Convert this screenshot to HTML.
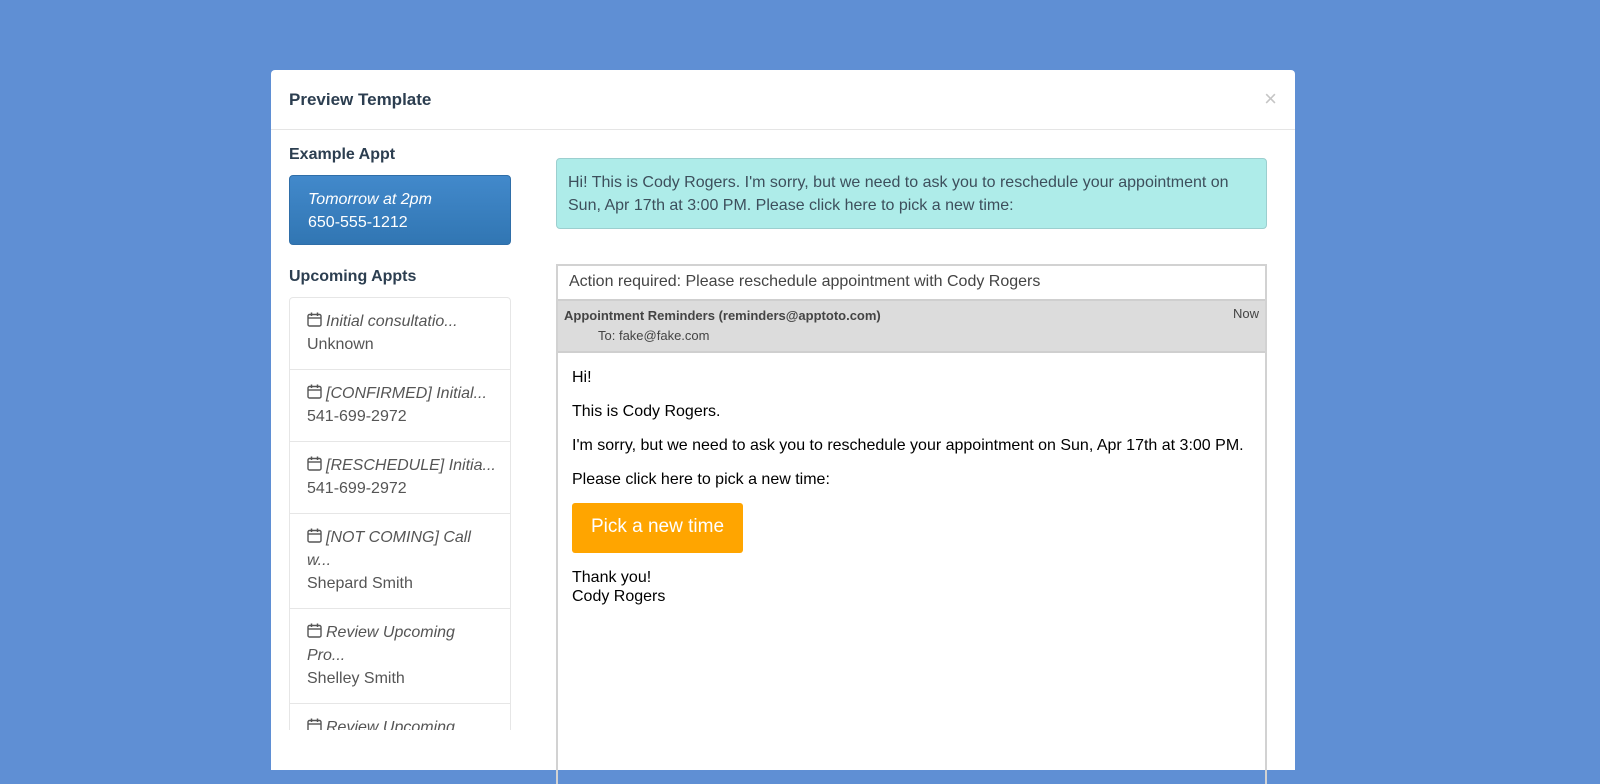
<!DOCTYPE html>
<html><head><style>
*{margin:0;padding:0;box-sizing:border-box}
body{width:1600px;height:751px;background:#5f8fd4;font-family:"Liberation Sans",sans-serif;position:relative;overflow:hidden;color:#444}
.modal{position:absolute;left:271px;top:70px;width:1024px;height:700px;background:#fff;border-radius:4px 4px 0 0}
.hdr{position:absolute;left:0;top:0;width:100%;height:60px;border-bottom:1px solid #e5e5e5}
.hdr h4{position:absolute;left:18px;top:20px;font-size:17px;font-weight:bold;color:#2c3e50}
.close{position:absolute;right:18px;top:16px;font-size:22px;color:#c5c5c5}
.lbl{position:absolute;left:18px;font-size:16px;font-weight:bold;color:#2c3e50}
.ex{position:absolute;left:18px;top:105px;width:222px;height:70px;border-radius:4px;background:linear-gradient(#4289cb,#3176b3);border:1px solid #2f6ea8;color:#fff;padding:12px 18px;font-size:16px;line-height:23px}
.list{position:absolute;left:18px;top:227px;width:222px;height:433px;overflow:hidden}
.it{border:1px solid #e6e6e6;border-top:none;padding:12px 17px 13px;font-size:16px;line-height:23px;color:#555}
.it:first-child{border-top:1px solid #e6e6e6;border-radius:4px 4px 0 0}
.it i{color:#555}
.nw{white-space:nowrap}
.cal{display:inline-block;vertical-align:-1px;margin-right:4px}
.alert{position:absolute;left:285px;top:88px;width:711px;height:71px;background:#aeece9;border:1px solid #9ccfcf;border-radius:4px;padding:12px 11px;font-size:16px;line-height:23px;color:#3d4f5c}
.mail{position:absolute;left:285px;top:194px;width:711px;height:520px;border:2px solid #d2d2d2;border-bottom:none}
.subj{height:35px;border-bottom:2px solid #cfcfcf;padding:7px 11px;font-size:16px;color:#444}
.from{height:52px;background:#dcdcdc;border-bottom:2px solid #cfcfcf;position:relative;font-size:13px;color:#444}
.from b{position:absolute;left:6px;top:7px}
.from .to{position:absolute;left:40px;top:27px}
.from .now{position:absolute;right:6px;top:5px}
.body{padding:15px 14px;font-size:16px;color:#000;line-height:19px}
.body p{margin-bottom:15px}
.btn{display:inline-block;background:#ffa500;color:#fff;font-size:19px;width:171px;height:50px;line-height:48px;text-align:center;border-radius:3px;margin:-1px 0 15px}
</style></head><body>
<div class="modal">
<div class="hdr"><h4>Preview Template</h4><div class="close">×</div></div>
<div class="lbl" style="top:76px">Example Appt</div>
<div class="ex"><i>Tomorrow at 2pm</i><br>650-555-1212</div>
<div class="lbl" style="top:198px">Upcoming Appts</div>
<div class="list">
<div class="it"><span class="nw"><svg class="cal" width="15" height="15" viewBox="0 0 15 15"><rect x="1" y="2.5" width="13" height="11.5" rx="1.5" fill="none" stroke="#555" stroke-width="1.4"/><line x1="1" y1="6" x2="14" y2="6" stroke="#555" stroke-width="1.4"/><line x1="4.5" y1="0.5" x2="4.5" y2="4" stroke="#555" stroke-width="1.5"/><line x1="10.5" y1="0.5" x2="10.5" y2="4" stroke="#555" stroke-width="1.5"/></svg><i>Initial consultatio...</i></span><br>Unknown</div>
<div class="it"><span class="nw"><svg class="cal" width="15" height="15" viewBox="0 0 15 15"><rect x="1" y="2.5" width="13" height="11.5" rx="1.5" fill="none" stroke="#555" stroke-width="1.4"/><line x1="1" y1="6" x2="14" y2="6" stroke="#555" stroke-width="1.4"/><line x1="4.5" y1="0.5" x2="4.5" y2="4" stroke="#555" stroke-width="1.5"/><line x1="10.5" y1="0.5" x2="10.5" y2="4" stroke="#555" stroke-width="1.5"/></svg><i>[CONFIRMED] Initial...</i></span><br>541-699-2972</div>
<div class="it"><span class="nw"><svg class="cal" width="15" height="15" viewBox="0 0 15 15"><rect x="1" y="2.5" width="13" height="11.5" rx="1.5" fill="none" stroke="#555" stroke-width="1.4"/><line x1="1" y1="6" x2="14" y2="6" stroke="#555" stroke-width="1.4"/><line x1="4.5" y1="0.5" x2="4.5" y2="4" stroke="#555" stroke-width="1.5"/><line x1="10.5" y1="0.5" x2="10.5" y2="4" stroke="#555" stroke-width="1.5"/></svg><i>[RESCHEDULE] Initia...</i></span><br>541-699-2972</div>
<div class="it"><svg class="cal" width="15" height="15" viewBox="0 0 15 15"><rect x="1" y="2.5" width="13" height="11.5" rx="1.5" fill="none" stroke="#555" stroke-width="1.4"/><line x1="1" y1="6" x2="14" y2="6" stroke="#555" stroke-width="1.4"/><line x1="4.5" y1="0.5" x2="4.5" y2="4" stroke="#555" stroke-width="1.5"/><line x1="10.5" y1="0.5" x2="10.5" y2="4" stroke="#555" stroke-width="1.5"/></svg><i>[NOT COMING] Call<br>w...</i><br>Shepard Smith</div>
<div class="it"><svg class="cal" width="15" height="15" viewBox="0 0 15 15"><rect x="1" y="2.5" width="13" height="11.5" rx="1.5" fill="none" stroke="#555" stroke-width="1.4"/><line x1="1" y1="6" x2="14" y2="6" stroke="#555" stroke-width="1.4"/><line x1="4.5" y1="0.5" x2="4.5" y2="4" stroke="#555" stroke-width="1.5"/><line x1="10.5" y1="0.5" x2="10.5" y2="4" stroke="#555" stroke-width="1.5"/></svg><i>Review Upcoming<br>Pro...</i><br>Shelley Smith</div>
<div class="it"><svg class="cal" width="15" height="15" viewBox="0 0 15 15"><rect x="1" y="2.5" width="13" height="11.5" rx="1.5" fill="none" stroke="#555" stroke-width="1.4"/><line x1="1" y1="6" x2="14" y2="6" stroke="#555" stroke-width="1.4"/><line x1="4.5" y1="0.5" x2="4.5" y2="4" stroke="#555" stroke-width="1.5"/><line x1="10.5" y1="0.5" x2="10.5" y2="4" stroke="#555" stroke-width="1.5"/></svg><i>Review Upcoming<br>Pro...</i><br>Someone</div>
</div>
<div class="alert">Hi! This is Cody Rogers. I'm sorry, but we need to ask you to reschedule your appointment on Sun, Apr 17th at 3:00 PM. Please click here to pick a new time:</div>
<div class="mail">
<div class="subj">Action required: Please reschedule appointment with Cody Rogers</div>
<div class="from"><b>Appointment Reminders (reminders@apptoto.com)</b><span class="to">To: fake@fake.com</span><span class="now">Now</span></div>
<div class="body">
<p>Hi!</p>
<p>This is Cody Rogers.</p>
<p>I'm sorry, but we need to ask you to reschedule your appointment on Sun, Apr 17th at 3:00 PM.</p>
<p>Please click here to pick a new time:</p>
<div class="btn">Pick a new time</div>
<div>Thank you!<br>Cody Rogers</div>
</div>
</div>
</div>
</body></html>
